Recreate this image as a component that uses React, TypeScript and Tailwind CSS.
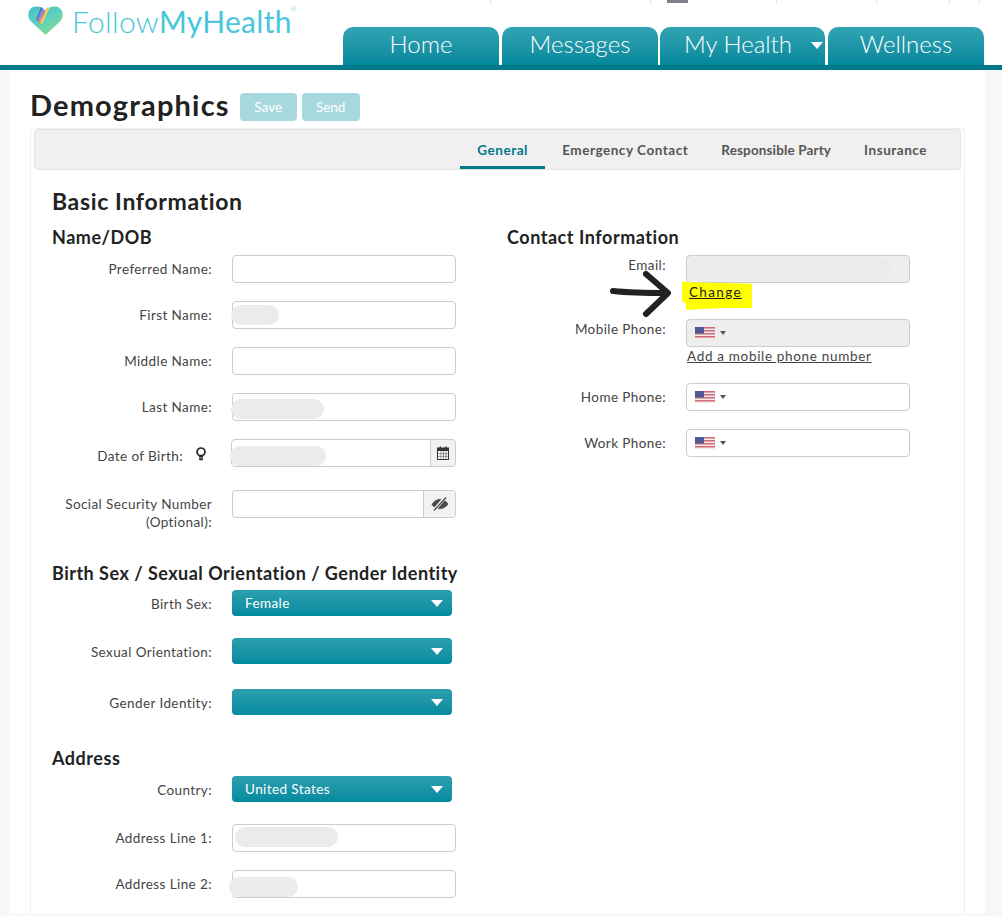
import React from "react";

const font = "[font-family:Lato,'Liberation_Sans',sans-serif]";

const HeartLogo = () => (
  <svg width="35" height="30" viewBox="0 0 35 30" className="mt-[3px] shrink-0">
    <defs>
      <linearGradient id="heartFill" x1="0.1" y1="0" x2="0.7" y2="1">
        <stop offset="0" stopColor="#42c4c4" />
        <stop offset="0.5" stopColor="#5fd0c0" />
        <stop offset="1" stopColor="#84dd88" />
      </linearGradient>
    </defs>
    <path d="M17.5 29 L3 15.5 C-1.5 11 -0.5 1 8 0.5 C12.5 0.3 15.5 2.5 17.5 5 C19.5 2.5 22.5 0.3 27 0.5 C35.5 1 36.5 11 32 15.5 Z" fill="url(#heartFill)" />
    <path d="M8 14 L13 1 L14.5 2 L9 15 Z" fill="#6a5fc4" />
    <path d="M9 15 L14.5 2 L16 4 L10 16 Z" fill="#4f9be0" />
    <path d="M10 16 L16 3.5 L17.5 5 L11 17 Z" fill="#ea6f9c" />
    <path d="M11 17 L17.5 5 L19 1.5 L20 2 L12.5 17.5 Z" fill="#f3a64a" />
    <path d="M12.5 17.5 L20 2 L22 1 L14 18 Z" fill="#f5de5a" />
  </svg>
);

const Flag = () => (
  <svg width="20" height="12" viewBox="0 0 20 12" className="shrink-0">
    <rect width="20" height="12" fill="#f1e9ea" />
    <rect y="0" width="20" height="1.5" fill="#cf6a74" />
    <rect y="3" width="20" height="1.5" fill="#cf6a74" />
    <rect y="6" width="20" height="1.5" fill="#cf6a74" />
    <rect y="9" width="20" height="1.5" fill="#cf6a74" />
    <rect width="9" height="6.5" fill="#4f5a94" />
  </svg>
);

const CalendarIcon = () => (
  <svg width="12" height="14" viewBox="0 0 12 14">
    <rect x="0.5" y="2" width="11" height="11.5" fill="#fff" stroke="#333" />
    <rect x="0.5" y="2" width="11" height="3" fill="#333" />
    <rect x="2.5" y="0.5" width="1.5" height="3" fill="#333" />
    <rect x="8" y="0.5" width="1.5" height="3" fill="#333" />
    <path d="M4 5 V13 M6.5 5 V13 M9 5 V13 M1 7.7 H11 M1 10.4 H11" stroke="#777" strokeWidth="0.8" />
  </svg>
);

const EyeSlashIcon = () => (
  <svg width="18" height="14" viewBox="0 0 18 14">
    <path d="M0.5 7.5 C3 3.5 6 2 9 2 C12 2 15 3.5 17.5 7 C15 10.5 12 12 9 12 C6 12 3 11 0.5 7.5 Z" fill="#4a4a4a" />
    <path d="M2.5 14 L14.5 0" stroke="#f2f2f2" strokeWidth="3.4" />
    <path d="M3 13.5 L15 0.5" stroke="#4a4a4a" strokeWidth="1.3" />
  </svg>
);

const BulbIcon = () => (
  <svg width="10" height="14" viewBox="0 0 10 14" className="shrink-0">
    <path d="M3.2 8.6 C1.8 7.6 1 6.5 1 5 C1 2.7 2.8 1 5 1 C7.2 1 9 2.7 9 5 C9 6.5 8.2 7.6 6.8 8.6 Z" fill="none" stroke="#222" strokeWidth="1.7" />
    <rect x="3" y="9" width="4" height="4.2" rx="0.8" fill="#222" />
    <rect x="3" y="10.6" width="4" height="0.7" fill="#fff" />
  </svg>
);

const Blob = ({ className }: { className: string }) => (
  <span className={`absolute rounded-full bg-[#ebebeb] ${className}`} />
);

const Label = ({ children }: { children: React.ReactNode }) => (
  <label className="w-[160px] shrink-0 pt-[5px] text-right text-[13.5px] leading-[18px] text-[#444] tracking-[0.03em]">
    {children}
  </label>
);

const TextRow = ({ label, blob, mb }: { label: string; blob?: string; mb: string }) => (
  <div className={`flex gap-5 ${mb}`}>
    <Label>{label}</Label>
    <div className="relative h-7 w-[224px] rounded border border-[#ccc] bg-white">{blob && <Blob className={blob} />}</div>
  </div>
);

const SelectRow = ({ label, value, mb }: { label: string; value?: string; mb: string }) => (
  <div className={`flex gap-5 ${mb}`}>
    <label className="w-[160px] shrink-0 pt-[5px] text-right text-[13.5px] leading-[18px] text-[#444] tracking-[0.03em]">{label}</label>
    <div className="flex h-[26px] w-[220px] items-center justify-between rounded bg-gradient-to-b from-[#2b9fb0] to-[#008b9e] pl-[13px] pr-[9px] text-[13.5px] tracking-[0.03em] text-white">
      <span>{value}</span>
      <span className="h-0 w-0 border-x-[6px] border-t-[7px] border-x-transparent border-t-white" />
    </div>
  </div>
);

const PhoneRow = ({ label, disabled, mb }: { label: string; disabled?: boolean; mb: string }) => (
  <div className={`flex gap-5 ${mb}`}>
    <label className={`w-[159px] shrink-0 text-right text-[13.5px] leading-[18px] text-[#444] tracking-[0.03em] ${disabled ? "pt-[1px]" : "pt-[5px]"}`}>{label}</label>
    <div className={`flex h-7 w-[224px] items-center gap-[5px] rounded border border-[#ccc] pl-2 ${disabled ? "bg-[#eee]" : "bg-white"}`}>
      <Flag />
      <span className="h-0 w-0 border-x-[3px] border-t-[4px] border-x-transparent border-t-[#555]" />
    </div>
  </div>
);

const NavTab = ({ label, width, caret }: { label: string; width: string; caret?: boolean }) => (
  <div className={`relative flex h-[38px] items-center justify-center rounded-t-[10px] bg-gradient-to-b from-[#30a4b4] to-[#00889b] pb-1 text-[24px] font-light text-white ${width}`}>
    <span className={caret ? "-ml-[9px]" : ""}>{label}</span>
    {caret && <span className="absolute right-[2px] top-[15px] h-0 w-0 border-x-[6px] border-t-[7px] border-x-transparent border-t-white" />}
  </div>
);

export default function App() {
  return (
    <div className={`relative h-[916px] w-[1002px] overflow-hidden bg-white ${font}`}>
      {/* cut off row above the header */}
      <div className="flex h-[3px]">
        <div className="ml-[490px] w-[160px] border-l border-[#ddd]" />
        <div className="w-[17px] border-l border-[#ddd]" />
        <div className="h-[3px] w-[21px] bg-[#7f8087]" />
        <div className="w-[89px] border-r border-[#ddd]" />
        <div className="w-[100px] border-r border-[#ddd]" />
        <div className="w-[73px] border-r border-[#ddd]" />
        <div className="w-[30px] border-r border-[#ddd]" />
      </div>

      <header className="flex h-[62px] items-end justify-between pl-[28px] pr-[18px]">
        <div className="flex gap-[9px] self-start">
          <HeartLogo />
          <div className="relative -mt-[3px] text-[30px] font-light leading-[42px] tracking-[0.01em] text-[#47c6dc]">
            Follow<span className="font-normal">MyHealth</span>
            <span className="absolute -right-[5px] top-[6px] text-[7px] leading-none">®</span>
          </div>
        </div>
        <nav className="flex">
          <NavTab label="Home" width="w-[156px]" />
          <NavTab label="Messages" width="ml-[3px] w-[156px]" />
          <NavTab label="My Health" width="ml-[2px] w-[165px]" caret />
          <NavTab label="Wellness" width="ml-[3px] w-[156px]" />
        </nav>
      </header>
      <div className="h-[5px] bg-[#007a8a]" />

      <div className="h-[846px] bg-[#f6f8fb] pl-[10px] pr-[17px]">
        <main className="h-[843px] bg-white pl-[20px] pr-[20px]">
          <div className="flex items-center gap-[10px] pt-[23px]">
            <h1 className="whitespace-nowrap pb-1 text-[29px] font-bold leading-[24px] tracking-[0.04em] text-[#222]">Demographics</h1>
            <button className="h-7 w-[57px] rounded bg-[#a6d8de] text-[13.5px] text-white">Save</button>
            <button className="-ml-[5px] h-7 w-[58px] rounded bg-[#a6d8de] text-[13.5px] text-white">Send</button>
          </div>

          <section className="mt-[7px] h-[800px] rounded-t border-x border-t border-[#f0f0f0]">
            <div className="mx-[3px] flex h-[41px] items-end justify-end rounded border border-[#e2e2e2] bg-[#f0f0f0] pr-[33px] text-[13.5px] font-bold tracking-[0.04em] text-[#555]">
              <span className="h-[38px] w-[85px] border-b-[3px] border-[#007a8a] pt-[9px] text-center leading-[20px] text-[#007a8a]">General</span>
              <span className="ml-[17px] h-[38px] pt-[9px] leading-[20px]">Emergency Contact</span>
              <span className="ml-[33px] h-[38px] pt-[9px] leading-[20px] tracking-[0.01em]">Responsible Party</span>
              <span className="ml-[33px] h-[38px] pt-[9px] leading-[20px]">Insurance</span>
            </div>

            <div className="flex pl-[21px] pt-[16px]">
              <div className="w-[455px] shrink-0">
                <h2 className="text-[23px] font-bold leading-[30px] tracking-[0.028em] text-[#222]">Basic Information</h2>
                <h3 className="mb-[6px] mt-[9px] text-[18px] font-bold leading-[24px] tracking-[0.03em] text-[#222]">Name/DOB</h3>

                <TextRow label="Preferred Name:" mb="mb-[18px]" />
                <TextRow label="First Name:" blob="-left-[2px] top-[3px] h-5 w-[48px]" mb="mb-[18px]" />
                <TextRow label="Middle Name:" mb="mb-[18px]" />
                <TextRow label="Last Name:" blob="-left-[2px] top-[5px] h-5 w-[93px]" mb="mb-[18px]" />

                <div className="mb-[23px] flex">
                  <label className="flex w-[160px] shrink-0 items-start justify-end gap-[13px] pr-[6px] pt-[8px] text-right text-[13.5px] leading-[18px] tracking-[0.03em] text-[#444]">
                    <span className="whitespace-nowrap">Date of Birth:</span>
                    <BulbIcon />
                  </label>
                  <div className="relative ml-[19px] flex h-7 w-[225px] rounded border border-[#ccc] bg-white">
                    <Blob className="-left-[2px] top-[6px] h-5 w-[96px]" />
                    <div className="ml-auto flex w-[25px] items-center justify-center rounded-r border-l border-[#ccc] bg-[#f2f2f2]">
                      <CalendarIcon />
                    </div>
                  </div>
                </div>

                <div className="mb-[30px] flex gap-5">
                  <label className="-ml-[10px] w-[170px] shrink-0 pt-[5px] text-right text-[13.5px] leading-[18px] tracking-[0.03em] text-[#444]">
                    Social Security Number
                    <br />
                    (Optional):
                  </label>
                  <div className="flex h-7 w-[224px] rounded border border-[#ccc] bg-white">
                    <div className="ml-auto flex w-[32px] items-center justify-center rounded-r border-l border-[#ccc] bg-[#f2f2f2]">
                      <EyeSlashIcon />
                    </div>
                  </div>
                </div>

                <h3 className="mb-[5px] whitespace-nowrap text-[18px] font-bold leading-[24px] tracking-[0.027em] text-[#222]">
                  Birth Sex / Sexual Orientation / Gender Identity
                </h3>
                <SelectRow label="Birth Sex:" value="Female" mb="mb-[22px]" />
                <SelectRow label="Sexual Orientation:" mb="mb-[25px]" />
                <SelectRow label="Gender Identity:" mb="mb-[31px]" />

                <h3 className="mb-[6px] text-[18px] font-bold leading-[24px] tracking-[0.03em] text-[#222]">Address</h3>
                <SelectRow label="Country:" value="United States" mb="mb-[22px]" />
                <TextRow label="Address Line 1:" blob="left-[2px] top-[2px] h-5 w-[103px]" mb="mb-[18px]" />
                <TextRow label="Address Line 2:" blob="-left-[4px] top-[6px] h-5 w-[69px]" mb="" />
              </div>

              <div className="relative w-[420px] pt-[39px]">
                <h3 className="mb-[6px] text-[18px] font-bold leading-[24px] tracking-[0.03em] text-[#222]">Contact Information</h3>

                <div className="flex gap-5">
                  <label className="w-[159px] shrink-0 pt-[1px] text-right text-[13.5px] leading-[18px] tracking-[0.03em] text-[#444]">Email:</label>
                  <div className="relative h-7 w-[224px] rounded border border-[#ccc] bg-[#eee]">
                    <Blob className="left-[1px] top-[1px] h-6 w-[203px] bg-[#eaeaea]" />
                  </div>
                </div>

                {/* hand drawn arrow on top of the screenshot */}
                <svg width="80" height="50" viewBox="0 0 80 50" className="absolute left-[97px] top-[83px]">
                  <path d="M42 5 L64 24 L42 45 M9 22 C28 24 45 24 63 24" fill="none" stroke="#222" strokeWidth="6" strokeLinecap="round" strokeLinejoin="round" />
                </svg>
                <div className="ml-[179px] mt-[-1px] h-[28px] w-[70px] -translate-x-[4px] bg-[#ffff00] pl-[7px] pt-[1px] text-[13.5px] leading-[18px] tracking-[0.1em] text-[#222] [clip-path:polygon(0_0,42%_3%,100%_6%,100%_94%,62%_92%,6%_100%,5%_74%,0_70%)]">
                  <a className="underline">Change</a>
                </div>

                <div className="mt-[9px]">
                  <PhoneRow label="Mobile Phone:" disabled mb="" />
                  <a className="ml-[180px] block text-[13.5px] leading-[18px] tracking-[0.05em] text-[#444] underline">Add a mobile phone number</a>
                </div>
                <div className="mt-[18px]">
                  <PhoneRow label="Home Phone:" mb="mb-[18px]" />
                  <PhoneRow label="Work Phone:" mb="" />
                </div>
              </div>
            </div>
          </section>
        </main>
      </div>
      <div className="h-[3px] bg-[#ddd]" />
    </div>
  );
}
